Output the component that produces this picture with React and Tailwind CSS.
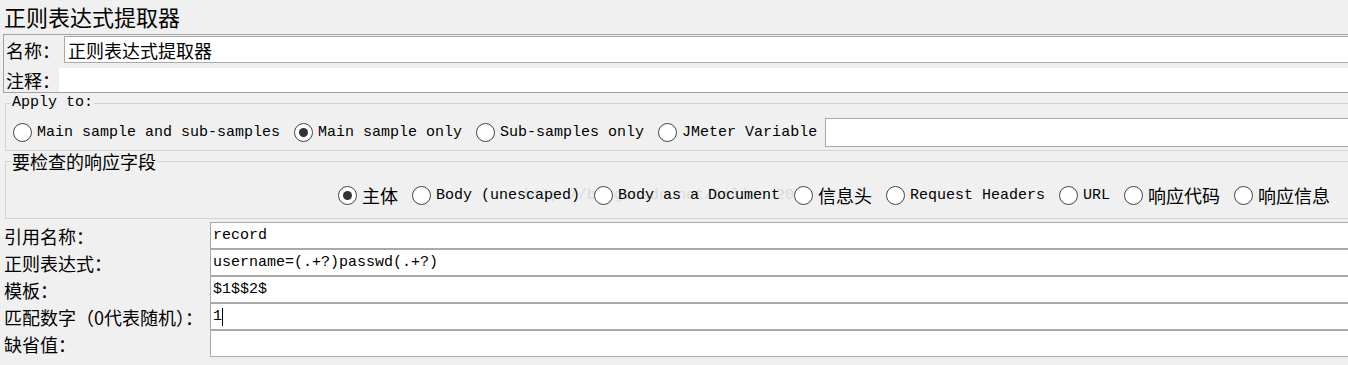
import React from 'react';

const cjk = "font-['Noto_Sans_CJK_SC',sans-serif] text-[18px] leading-[20px]";
const mono = "font-['Liberation_Mono','Noto_Sans_CJK_SC',monospace] text-[15px] leading-[20px]";

const Radio = ({ checked, children }) => (
  <div className="flex items-center">
    <span className="w-[19px] h-[19px] rounded-full border border-[#444] bg-white flex items-center justify-center mr-[5px] shrink-0">
      {checked && <span className="w-[9px] h-[9px] rounded-full bg-[#333]"></span>}
    </span>
    {children}
  </div>
);

const rows = [
  { label: '引用名称：', value: 'record' },
  { label: '正则表达式：', value: 'username=(.+?)passwd(.+?)' },
  { label: '模板：', value: '$1$$2$' },
  { label: '匹配数字（0代表随机）：', value: '1', cursor: true },
  { label: '缺省值：', value: '' },
];

const App = () => {
  return (
    <div className="w-[1348px] h-[365px] bg-[#f0f0f0] overflow-hidden text-black">
      {/* Title */}
      <div className="h-[34px] flex items-center pl-[4px] pb-[2px]">
        <span className="font-['Noto_Sans_CJK_SC',sans-serif] text-[22px] leading-[26px]">正则表达式提取器</span>
      </div>

      {/* Name / comment box */}
      <div className="ml-[3px] border border-[#a3a3a3] border-r-0 pt-[1px]">
        <div className="flex h-[27px]">
          <div className={`w-[60px] shrink-0 pl-[2px] flex items-center whitespace-nowrap ${cjk}`}>名称：</div>
          <div className="flex-1 bg-white border border-[#a9a9a9] border-r-0 flex items-center pl-[3px]">
            <span className={cjk}>正则表达式提取器</span>
          </div>
        </div>
        <div className="flex h-[24px] mt-[5px]">
          <div className={`w-[55px] shrink-0 pl-[2px] flex items-center whitespace-nowrap ${cjk}`}>注释：</div>
          <div className="relative flex-1 bg-white"></div>
        </div>
      </div>

      {/* Apply to */}
      <fieldset className="ml-[5px] border border-[#d4d4d4] border-r-0 w-[1400px] pt-[5px] pb-[3px]">
        <legend className={`ml-[5px] px-[1px] ${mono} leading-[18px]`}>Apply to:</legend>
        <div className="flex items-center pl-[7px]">
          <div className="flex items-center gap-[14px]">
            <Radio><span className={mono}>Main sample and sub-samples</span></Radio>
            <Radio checked><span className={mono}>Main sample only</span></Radio>
            <Radio><span className={mono}>Sub-samples only</span></Radio>
            <Radio><span className={mono}>JMeter Variable</span></Radio>
          </div>
          <div className="ml-[8px] flex-1 h-[29px] bg-white border border-[#a9a9a9] border-r-0"></div>
        </div>
      </fieldset>

      {/* Response field to check */}
      <fieldset className="relative ml-[5px] border border-[#d4d4d4] border-r-0 w-[1400px] pt-[13px] pb-[12px]">
        <legend className={`ml-[5px] px-[1px] ${cjk}`}>要检查的响应字段</legend>
        <span className={`absolute left-[518px] top-[15px] pointer-events-none text-[#dadada] ${mono}`}>http://blog.csdn.net/silicon2016</span>
        <div className="relative flex items-center gap-[14px] pl-[332px]">
          <Radio checked><span className={cjk}>主体</span></Radio>
          <Radio><span className={`${mono} pt-[2px]`}>Body (unescaped)</span></Radio>
          <Radio><span className={`${mono} pt-[2px]`}>Body as a Document</span></Radio>
          <Radio><span className={cjk}>信息头</span></Radio>
          <Radio><span className={`${mono} pt-[2px]`}>Request Headers</span></Radio>
          <Radio><span className={`${mono} pt-[2px]`}>URL</span></Radio>
          <Radio><span className={cjk}>响应代码</span></Radio>
          <Radio><span className={cjk}>响应信息</span></Radio>
        </div>
      </fieldset>

      {/* Extractor fields */}
      <div className="mt-[3px] grid grid-cols-[210px_1fr]">
        {rows.map((r) => (
          <React.Fragment key={r.label}>
            <div className={`h-[27px] flex items-center pl-[4px] whitespace-nowrap ${cjk}`}>{r.label}</div>
            <div className="h-[27px] bg-white border border-[#a9a9a9] border-r-0 flex items-center pl-[2px]">
              <span className={mono}>{r.value}</span>
              {r.cursor && <span className="w-[1px] h-[18px] bg-black"></span>}
            </div>
          </React.Fragment>
        ))}
      </div>
    </div>
  );
};

export default App;
